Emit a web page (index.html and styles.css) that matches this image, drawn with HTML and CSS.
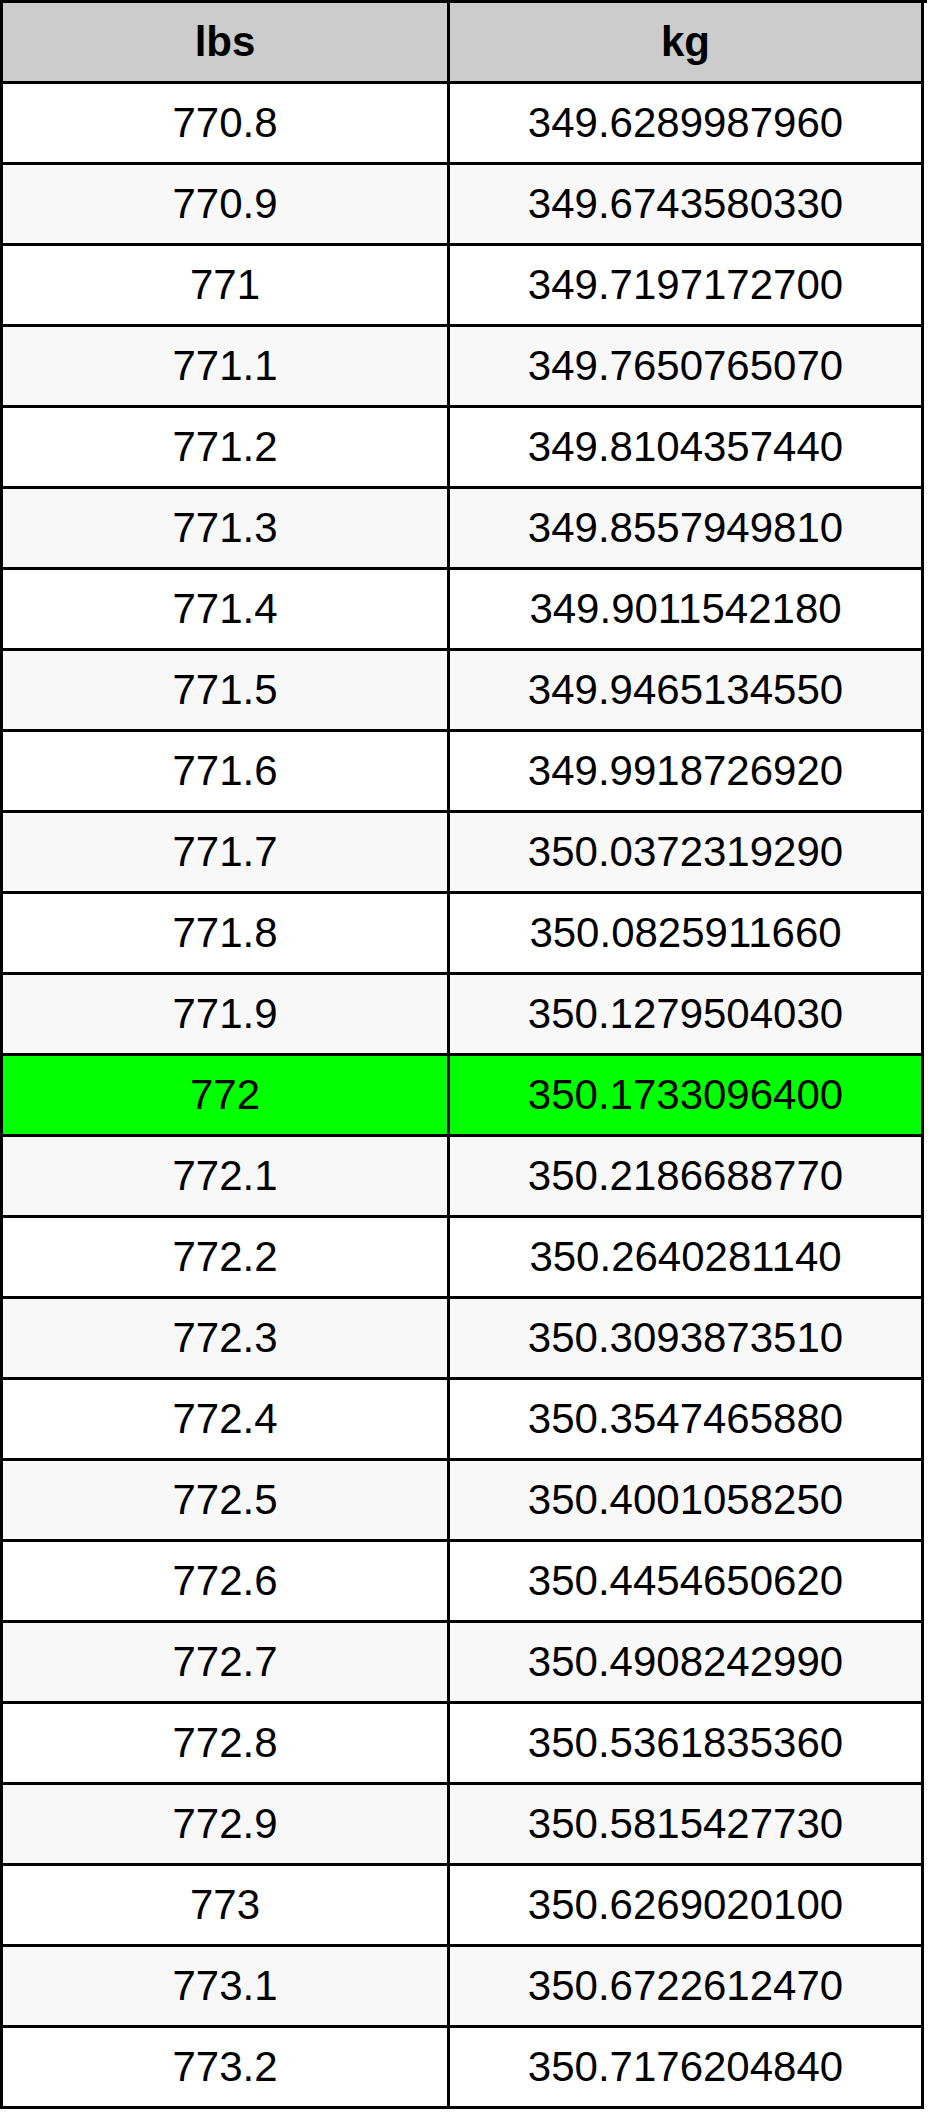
FILE: index.html
```html
<!DOCTYPE html>
<html lang="en">
<head>
<meta charset="utf-8">
<title>lbs to kg</title>
<link rel="stylesheet" href="styles.css">
</head>
<body>
<div class="table">
  <div class="cell head">lbs</div><div class="cell head">kg</div>
  <div class="cell">770.8</div><div class="cell">349.6289987960</div>
  <div class="cell alt">770.9</div><div class="cell alt">349.6743580330</div>
  <div class="cell">771</div><div class="cell">349.7197172700</div>
  <div class="cell alt">771.1</div><div class="cell alt">349.7650765070</div>
  <div class="cell">771.2</div><div class="cell">349.8104357440</div>
  <div class="cell alt">771.3</div><div class="cell alt">349.8557949810</div>
  <div class="cell">771.4</div><div class="cell">349.9011542180</div>
  <div class="cell alt">771.5</div><div class="cell alt">349.9465134550</div>
  <div class="cell">771.6</div><div class="cell">349.9918726920</div>
  <div class="cell alt">771.7</div><div class="cell alt">350.0372319290</div>
  <div class="cell">771.8</div><div class="cell">350.0825911660</div>
  <div class="cell alt">771.9</div><div class="cell alt">350.1279504030</div>
  <div class="cell hl">772</div><div class="cell hl">350.1733096400</div>
  <div class="cell alt">772.1</div><div class="cell alt">350.2186688770</div>
  <div class="cell">772.2</div><div class="cell">350.2640281140</div>
  <div class="cell alt">772.3</div><div class="cell alt">350.3093873510</div>
  <div class="cell">772.4</div><div class="cell">350.3547465880</div>
  <div class="cell alt">772.5</div><div class="cell alt">350.4001058250</div>
  <div class="cell">772.6</div><div class="cell">350.4454650620</div>
  <div class="cell alt">772.7</div><div class="cell alt">350.4908242990</div>
  <div class="cell">772.8</div><div class="cell">350.5361835360</div>
  <div class="cell alt">772.9</div><div class="cell alt">350.5815427730</div>
  <div class="cell">773</div><div class="cell">350.6269020100</div>
  <div class="cell alt">773.1</div><div class="cell alt">350.6722612470</div>
  <div class="cell">773.2</div><div class="cell">350.7176204840</div>
</div>
</body>
</html>
```

FILE: styles.css
```css
html, body {
  margin: 0;
  padding: 0;
  background: #ffffff;
}

.table {
  display: grid;
  grid-template-columns: 447px 474px;
  grid-auto-rows: 81px;
  width: 924px;
  border-left: 3px solid #000;
  border-top: 3px solid #000;
  font-family: "Liberation Sans", Arial, sans-serif;
  font-size: 42px;
  color: #000;
}

.cell {
  display: flex;
  align-items: center;
  justify-content: center;
  border-right: 3px solid #000;
  border-bottom: 3px solid #000;
  background: #ffffff;
}

.head {
  background: #cccccc;
  font-weight: bold;
}

.alt {
  background: #f8f8f8;
}

.hl {
  background: #00ff00;
}
```
